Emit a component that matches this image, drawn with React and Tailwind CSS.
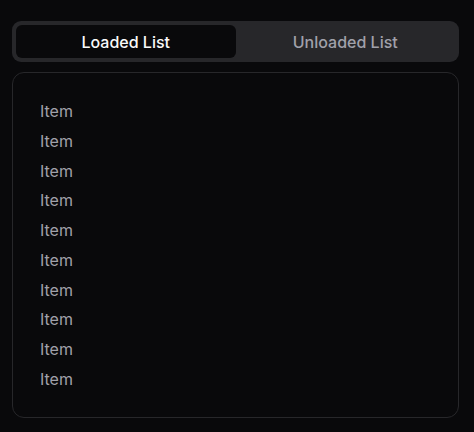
import { useState } from "react";

const items = Array.from({ length: 10 }, () => "Item");

export default function App() {
  const [tab, setTab] = useState("loaded");

  return (
    <div
      className="min-h-[432px] w-full bg-[#09090b] pl-3 pr-[15px] pt-[21px] pb-[14px]"
      style={{ fontFamily: "Inter, 'Noto Sans', sans-serif" }}
    >
      {/* tab list */}
      <div className="grid h-[41px] grid-cols-2 rounded-[9px] bg-[#27272a] p-1">
        <button
          onClick={() => setTab("loaded")}
          className={
            tab === "loaded"
              ? "rounded-[6px] bg-[#09090b] text-[16px] font-medium text-[#fafafa]"
              : "rounded-[6px] text-[16px] font-medium text-[#a1a1aa]"
          }
        >
          Loaded List
        </button>
        <button
          onClick={() => setTab("unloaded")}
          className={
            tab === "unloaded"
              ? "rounded-[6px] bg-[#09090b] text-[16px] font-medium text-[#fafafa]"
              : "rounded-[6px] text-[16px] font-medium text-[#a1a1aa]"
          }
        >
          Unloaded List
        </button>
      </div>

      {/* panel */}
      <div className="mt-[10px] h-[346px] rounded-[12px] border border-[#27272a] px-[27px] pt-[24px] pb-[22px]">
        {tab === "loaded" && (
          <ul>
            {items.map((it, i) => (
              <li key={i} className="h-[29.75px] text-[16px] leading-[29.75px] text-[#a1a1aa]">
                {it}
              </li>
            ))}
          </ul>
        )}
      </div>
    </div>
  );
}
